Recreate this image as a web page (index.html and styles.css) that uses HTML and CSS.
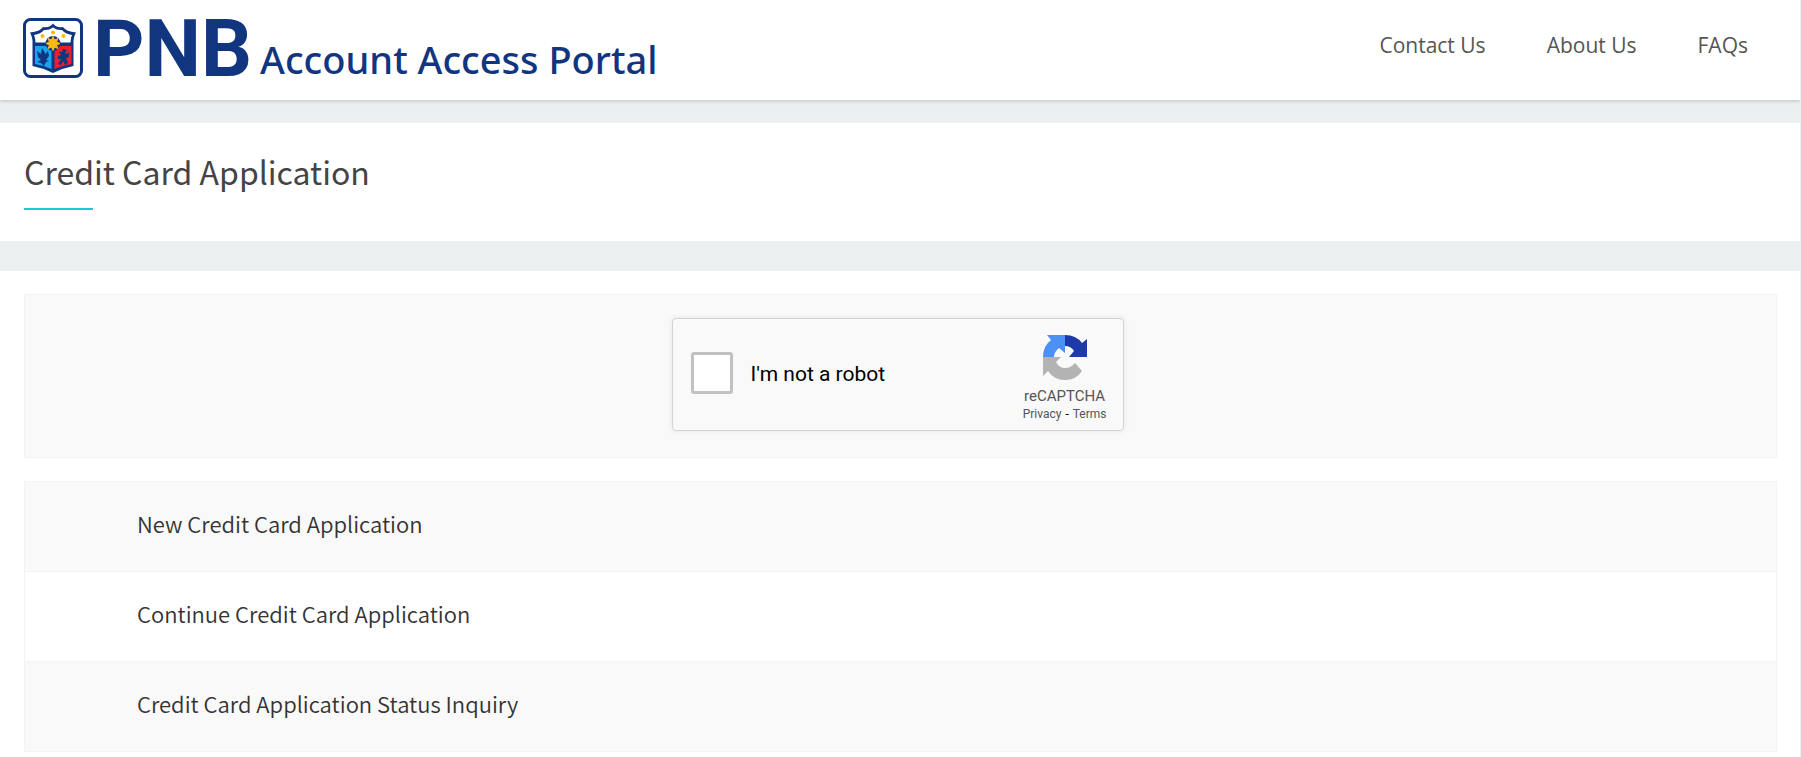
FILE: index.html
```html
<!DOCTYPE html>
<html lang="en">

<head>
  <meta charset="UTF-8">
  <meta name="viewport" content="width=device-width, initial-scale=1.0">
  <title>PNB Account Access Portal</title>
  <link rel="stylesheet" href="styles.css">
</head>

<body>
  <header class="header">
    <a class="brand" href="#">
      <svg class="brand-seal" viewBox="0 0 60 60" aria-hidden="true">
        <rect x="1.5" y="1.5" width="57" height="57" rx="6" fill="#fff" stroke="#11367f" stroke-width="3" />
        <path d="M30 5.500 Q33 10 40 9 Q43 13.500 53 14.500 Q50 20 50.500 26 V48 Q40 50 30 55 Q20 50 9.500 48 V26 Q10 20 7 14.500 Q17 13.500 20 9 Q27 10 30 5.500 Z" fill="#11367f" />
        <path d="M30 9.500 Q34 12.500 39 12 Q42 16 49 17 Q47.500 20 47.500 24.500 H12.500 Q12.500 20 11 17 Q18 16 21 12 Q26 12.500 30 9.500 Z" fill="#fff" />
        <path d="M12 28 H28.500 V51 Q21 47.500 12 46 Z" fill="#16a6f0" />
        <path d="M31.500 28 H48.500 V46 Q39 47.500 31.500 51 Z" fill="#ed1c2e" />
        <path d="M19 30 L21 33 L22.500 36 L25 33 L26 38 L23 42 L26 43 L23 44 L21 48 L18 45 L14 44 L18 42 L15 39 L14 33 L18 36 Z" fill="#11367f" />
        <path d="M40 31 L44 32 L42 35 L45 36 L46 33 L46 39 L43 40 L45 45 L42 47 L40 43 L38 47 L35 46 L38 41 L35 41 L35 38 L38 37 L36 34 L39 34 Z" fill="#11367f" />
        <circle cx="30" cy="25.500" r="7.500" fill="#11367f" />
        <path d="M30 18.500 L31.500 22 L35 20.500 L33.500 24 L37 25.500 L33.500 27 L35 30.500 L31.500 29 L30 32.500 L28.500 29 L25 30.500 L26.500 27 L23 25.500 L26.500 24 L25 20.500 L28.500 22 Z" fill="#fdb913" stroke="#fdb913" />
        <circle cx="19.500" cy="18" r="2" fill="#fdb913" />
        <circle cx="30" cy="14.500" r="2" fill="#fdb913" />
        <circle cx="40.500" cy="18" r="2" fill="#fdb913" />
      </svg>
      <span class="brand-name">PNB</span>
      <span class="brand-title">Account Access Portal</span>
    </a>
    <nav class="nav">
      <a href="#">Contact Us</a>
      <a href="#">About Us</a>
      <a href="#">FAQs</a>
    </nav>
  </header>

  <section class="page-title">
    <h1>Credit Card Application</h1>
  </section>

  <main class="content">
    <div class="panel">
      <div class="captcha-frame">
        <div class="captcha">
          <input type="checkbox" id="robot" class="captcha-check">
          <label for="robot" class="captcha-label">I'm not a robot</label>
          <div class="captcha-brand">
            <svg class="captcha-logo" viewBox="0 0 44 45" aria-hidden="true">
              <path d="M22 0 H4 L8 5 Q0 11 0 22 H11 Q11 17 16 13 L22 18 Z" fill="#4a90f5" />
              <path d="M22 0 Q33 0 39 8 L44 4 V22 H26 L31 16 Q28 11 22 11 Z" fill="#1c3aa9" />
              <path d="M0 22 H18 L13 27 Q16 33 22 33 Q28 33 32 28 L39 36 Q33 45 22 45 Q11 45 5 36 L0 41 Z" fill="#b3b3b3" />
            </svg>
            <span class="captcha-name">reCAPTCHA</span>
            <span class="captcha-links"><a href="#">Privacy</a><span>-</span><a href="#">Terms</a></span>
          </div>
        </div>
      </div>
    </div>

    <ul class="menu">
      <li><a href="#">New Credit Card Application</a></li>
      <li><a href="#">Continue Credit Card Application</a></li>
      <li><a href="#">Credit Card Application Status Inquiry</a></li>
    </ul>
  </main>
</body>

</html>
```
FILE: styles.css
```css
* {
  box-sizing: border-box;
}

body {
  margin: 0;
  background-color: #fff;
  border-right: 1px solid #ecf0f1;
  font-family: "Noto Sans CJK SC", sans-serif;
  font-weight: 350;
  color: #333;
}

a {
  color: inherit;
  text-decoration: none;
}

.header {
  position: relative;
  display: flex;
  justify-content: space-between;
  height: 100px;
  padding: 18px 52px 0 23px;
  background-color: #fff;
  box-shadow: 0 1px 4px rgba(0, 0, 0, 0.2);
  font-family: "Noto Sans", sans-serif;
}

.brand {
  display: flex;
  height: 60px;
  color: #11367f;
  white-space: nowrap;
}

.brand-seal {
  width: 60px;
  height: 60px;
}

.brand-name {
  margin-left: 10px;
  font-family: Roboto, sans-serif;
  font-size: 80px;
  font-weight: 700;
  line-height: 62px;
}

.brand-title {
  margin-left: 8px;
  padding-top: 11px;
  font-size: 38px;
  font-weight: 500;
  line-height: 60px;
}

.nav {
  display: flex;
  gap: 61px;
  font-family: "Open Sans", sans-serif;
  font-size: 21px;
  font-weight: 400;
  line-height: 54px;
  color: #555;
}

.page-title {
  padding: 28px 24px 31px;
  border-top: 23px solid #ecf0f1;
  border-bottom: 30px solid #ecf0f1;
}

.page-title h1 {
  margin: 0;
  font-size: 32px;
  font-weight: 400;
  line-height: 40px;
  color: #444;
}

.page-title h1::after {
  content: "";
  display: block;
  width: 69px;
  height: 2px;
  margin-top: 17px;
  background-color: #1bc8d6;
}

.content {
  padding: 23px 23px 5px 24px;
}

.panel {
  display: flex;
  justify-content: center;
  padding: 23px 25px 22px 23px;
  margin-bottom: 23px;
  background-color: #f9f9f9;
  border: 1px solid #f3f3f3;
}

.captcha-frame {
  width: 456px;
  height: 117px;
}

.captcha {
  display: flex;
  align-items: center;
  width: 452px;
  height: 113px;
  padding: 0 16px 4px 18px;
  background-color: #f9f9f9;
  border: 1px solid #d3d3d3;
  border-radius: 4px;
  box-shadow: 0 0 6px rgba(0, 0, 0, 0.08);
  font-family: Roboto, sans-serif;
  font-weight: 400;
}

.captcha-check {
  appearance: none;
  width: 42px;
  height: 42px;
  margin: 0;
  background-color: #fff;
  border: 3px solid #c1c1c1;
  border-radius: 3px;
}

.captcha-label {
  flex: 1;
  margin-left: 18px;
  padding-top: 2px;
  font-size: 21px;
  color: #000;
}

.captcha-brand {
  display: flex;
  flex-direction: column;
  align-items: center;
  padding-top: 12px;
  color: #555;
}

.captcha-logo {
  width: 44px;
  height: 45px;
  margin-bottom: 6px;
}

.captcha-name {
  font-size: 15px;
  line-height: 20px;
}

.captcha-links {
  display: flex;
  gap: 4px;
  font-size: 12px;
  line-height: 16px;
}

.captcha-links span {
  color: #000;
}

.menu {
  margin: 0;
  padding: 0;
  list-style: none;
  border: 1px solid #f3f3f3;
}

.menu li + li {
  border-top: 1px solid #f3f3f3;
}

.menu li:nth-child(odd) {
  background-color: #f9f9f9;
}

.menu a {
  display: block;
  padding: 0 112px 6px;
  font-size: 22px;
  line-height: 83px;
}
```
